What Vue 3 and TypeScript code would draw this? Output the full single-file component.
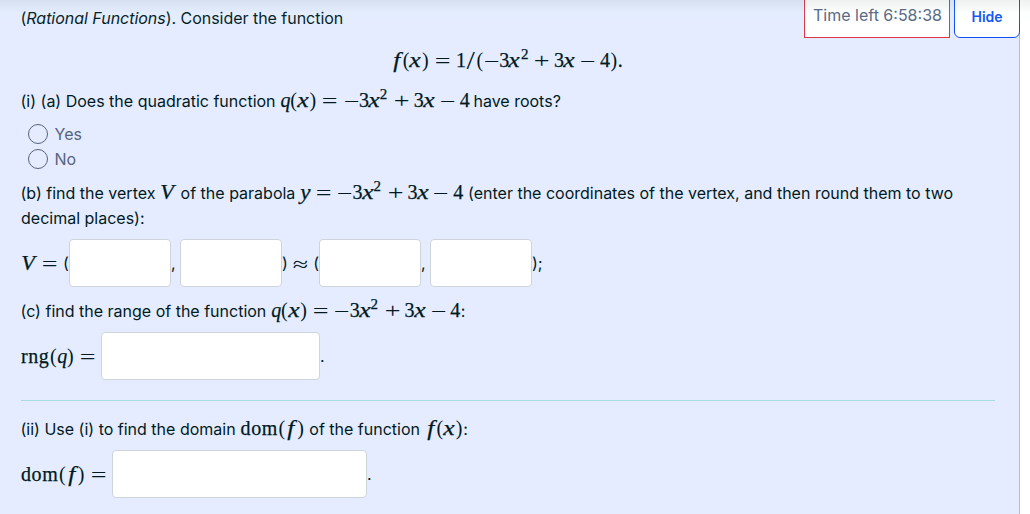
<script setup lang="ts">
import { defineComponent, h, ref } from 'vue';

const answer = ref<string | null>(null);
const timeLeft = '6:58:38';

// Italic math letters and the class that sets their advance width
const letters: Record<string, string> = { f: 'mf', x: 'mx', q: 'mq', y: 'my', V: 'mv' };

// Tiny formula renderer: names in quotes are upright, ^n is a superscript
const Tex = defineComponent({
  props: { src: { type: String, required: true } },
  setup(props) {
    return () => {
      const tokens = props.src.match(/'[a-z]+'|\^\d|\S/g) ?? [];
      return h('span', { class: 'tex' }, tokens.map((t, i) => {
        if (t[0] === "'") return h('span', { class: 'name' }, t.slice(1, -1));
        if (t[0] === '^') return h('span', { class: 'sup' }, t[1]);
        if (letters[t]) return h('span', { class: ['glyph', letters[t]] }, [h('i', t)]);
        if (t === '=' || t === '≈') return h('span', { class: 'glyph op rel' }, [h('b', t)]);
        if (t === '+' || t === '−') {
          const unary = i === 0 || '(='.includes(tokens[i - 1]);
          return h('span', { class: ['glyph op', unary ? '' : 'bin'] }, [h('b', t)]);
        }
        if (t === '/') return h('span', { class: 'glyph slash' }, [h('b', t)]);
        if (t === '(' || t === ')') return h('span', { class: 'glyph paren' }, t);
        return h('span', t);
      }));
    };
  },
});
</script>

<template>
  <div class="page">
    <main class="question">
      <p class="line intro">(<em>Rational Functions</em>). Consider the function</p>
      <p class="display"><Tex src="f(x)=1/(−3x^2+3x−4)." /></p>
      <p class="line part-a">(i) (a) Does the quadratic function <Tex src="q(x)=−3x^2+3x−4" /> <span class="tail">have roots?</span></p>
      <div class="choices">
        <label v-for="option in ['Yes', 'No']" :key="option" class="choice">
          <input v-model="answer" type="radio" name="roots" :value="option" />
          <span>{{ option }}</span>
        </label>
      </div>
      <p class="line part-b">(b) find the vertex <Tex src="V" /> of the parabola <Tex src="y=−3x^2+3x−4" /> (enter the coordinates of the vertex, and then round them to two decimal places):</p>
      <div class="entry vertex">
        <span class="lead vlead"><Tex src="V=" />(</span>
        <input type="text" class="small" />
        <span class="comma">,</span>
        <input type="text" class="small" />
        <span class="approx">)<Tex src="≈" />(</span>
        <input type="text" class="small" />
        <span class="comma">,</span>
        <input type="text" class="small" />
        <span>);</span>
      </div>
      <p class="line part-c">(c) find the range of the function <Tex src="q(x)=−3x^2+3x−4" />:</p>
      <div class="entry range">
        <span class="lead rlead"><Tex src="'rng'(q)=" /></span>
        <input type="text" class="medium" />
        <span class="dot">.</span>
      </div>
      <hr />
      <p class="line part-ii">(ii) Use (i) to find the domain <Tex src="'dom'(f)" /> of the function <Tex src="f(x)" />:</p>
      <div class="entry domain">
        <span class="lead dlead"><Tex src="'dom'(f)=" /></span>
        <input type="text" class="large" />
        <span class="dot">.</span>
      </div>
    </main>
    <div class="timer">
      <div class="time">Time left {{ timeLeft }}</div>
      <button type="button">Hide</button>
    </div>
    <div class="shade"></div>
  </div>
</template>

<style>
body {
  margin: 0;
  background: #fff;
}
</style>

<style scoped>
.page {
  position: relative;
  height: 514px;
  overflow: hidden;
  font-family: Inter, sans-serif;
  font-size: 16px;
  color: #001a1e;
}

.question {
  box-sizing: border-box;
  width: 1020px;
  height: 514px;
  padding: 6px 24px 0 21px;
  background: #e5ecff;
  border-right: 1px solid #a9b8f5;
}

p {
  margin: 0;
}

.line {
  line-height: 25px;
  text-indent: -0.5px;
}

.intro {
  letter-spacing: -0.03px;
}

.display {
  margin-top: 18px;
  height: 25px;
  padding-right: 2px;
  line-height: 25px;
  text-align: center;
}

.part-a {
  margin-top: 15px;
}

.tail {
  margin-left: -1px;
}

.choices {
  margin-top: 7px;
  padding-left: 7px;
  color: #56637f;
}

.choice {
  display: flex;
  align-items: center;
  gap: 7.5px;
  height: 25px;
}

.choice input {
  appearance: none;
  box-sizing: border-box;
  width: 20px;
  height: 20px;
  margin: 0 -0.5px;
  border: 1px solid #56637f;
  border-radius: 50%;
}

.part-b {
  margin-top: 10px;
}

.entry {
  display: flex;
  align-items: center;
  height: 48px;
  line-height: 25px;
}

.entry input {
  box-sizing: border-box;
  flex: none;
  height: 48px;
  padding: 0 8px;
  border: 1px solid #ced4da;
  border-radius: 4px;
  background: #fff;
  font: inherit;
}

.entry .small {
  width: 102px;
}

.entry .medium {
  width: 219px;
}

.entry .large {
  width: 255px;
}

.vertex {
  margin-top: 8px;
}

.lead {
  display: flex;
  flex: none;
}

.vlead {
  width: 48px;
}

.vlead :deep(.tex) {
  width: 42px;
}

.rlead {
  width: 80px;
}

.dlead {
  width: 91px;
}

.comma {
  width: 9px;
}

.approx {
  display: flex;
  justify-content: space-between;
  width: 37px;
}

.part-c {
  margin-top: 12px;
}

.range {
  margin-top: 8px;
}

hr {
  height: 1px;
  margin: 20px 0 16px;
  border: 0;
  background: #a5dde3;
}

.domain {
  margin-top: 8px;
}

/* Math */
:deep(.tex) {
  font-family: 'Liberation Serif', serif;
  font-size: 20px;
  line-height: 22px;
  letter-spacing: 0;
  text-indent: 0;
  white-space: nowrap;
  -webkit-text-stroke: 0.25px;
}

.line :deep(.tex) {
  margin: 0 0.3px 0 0.5px;
}

.entry :deep(.tex) {
  line-height: 25px;
}

:deep(.glyph) {
  display: inline-block;
  text-align: center;
}

:deep(.glyph i),
:deep(.glyph b) {
  display: inline-block;
  font-weight: 400;
}

:deep(.mx) {
  width: 0.572em;
}

:deep(.mx i) {
  transform: translateX(-0.5px) scaleX(1.28);
}

:deep(.mf) {
  width: 0.55em;
}

:deep(.mf i) {
  transform: scaleX(1.25);
}

:deep(.mq) {
  width: 0.46em;
}

:deep(.my) {
  width: 0.5em;
}

:deep(.my i) {
  transform: scaleX(1.15);
}

:deep(.mv) {
  width: 0.769em;
}

:deep(.mv i) {
  transform: translateX(-1px) scaleX(1.12);
}

:deep(.op) {
  width: 0.778em;
}

:deep(.op b) {
  transform: translateY(1px) scaleX(1.4);
  -webkit-text-stroke: 0;
}

:deep(.rel) {
  margin: 0 0.278em;
}

:deep(.bin) {
  margin: 0 0.222em;
}

:deep(.slash) {
  width: 0.5em;
}

:deep(.slash b) {
  transform: scale(1.5, 1.3);
  -webkit-text-stroke: 0;
}

:deep(.paren) {
  width: 0.389em;
  -webkit-text-stroke: 0;
}

:deep(.sup) {
  display: inline-block;
  width: 0.6em;
  font-size: 15px;
  transform: translate(-0.5px, -8px);
}

:deep(.name) {
  display: inline-block;
  letter-spacing: 0.03em;
}

.approx :deep(.rel) {
  margin: 0;
}

/* Quiz timer floating over the question */
.timer {
  position: absolute;
  top: -6px;
  right: 10px;
  display: flex;
  gap: 4px;
}

.time {
  box-sizing: border-box;
  width: 146px;
  height: 44px;
  padding: 8px 0 0 8px;
  border: 1px solid #dc3545;
  background: #fff;
  color: #56637f;
  line-height: 24px;
  white-space: nowrap;
}

button {
  box-sizing: border-box;
  width: 66px;
  height: 44px;
  padding: 0;
  border: 1px solid #0f50f5;
  border-radius: 6px;
  background: #fff;
  color: #0f50f5;
  font: 600 14px Inter, sans-serif;
}

.shade {
  position: absolute;
  top: 0;
  left: 0;
  width: 100%;
  height: 26px;
  background: linear-gradient(rgba(50, 75, 60, 0.08), rgba(200, 255, 240, 0.06) 50%, rgba(255, 255, 255, 0));
  pointer-events: none;
}
</style>
